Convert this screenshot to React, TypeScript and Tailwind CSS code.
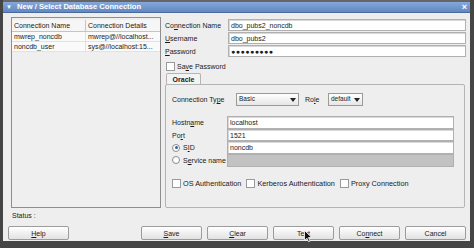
import React from 'react'

const U = ({ children }: { children: React.ReactNode }) => <span className="underline underline-offset-[1px]">{children}</span>

const Field = ({ label, value, password = false }: { label: React.ReactNode; value: string; password?: boolean }) => (
  <div className="flex items-center h-[12px]">
    <div className="w-[63px] shrink-0">{label}</div>
    <div className="flex-1 h-[12px] bg-white border border-[#b0b0b0] shadow-[inset_1px_1px_0_#d8d8d8] flex items-center px-[2px]">
      {password ? <span className="tracking-[0.5px] text-[7px]">●●●●●●●●●</span> : value}
    </div>
  </div>
)

const InnerField = ({ label, value, disabled = false }: { label: React.ReactNode; value?: string; disabled?: boolean }) => (
  <div className="flex items-center h-[12.7px]">
    <div className="w-[55px] shrink-0 flex items-center">{label}</div>
    <div
      className={
        'flex-1 h-[12.5px] border border-[#b0b0b0] flex items-center px-[2px] ' +
        (disabled ? 'bg-[#c2c2c2]' : 'bg-white shadow-[inset_1px_1px_0_#d8d8d8]')
      }
    >
      {value}
    </div>
  </div>
)

const Check = ({ label }: { label: React.ReactNode }) => (
  <div className="flex items-center gap-[2px]">
    <div className="w-[9px] h-[9px] bg-white border border-[#9a9a9a]" />
    <span>{label}</span>
  </div>
)

const Radio = ({ on }: { on?: boolean }) => (
  <div className="w-[8px] h-[8px] rounded-full bg-white border border-[#8a8a8a] flex items-center justify-center mr-[3px]">
    {on && <div className="w-[3px] h-[3px] rounded-full bg-[#3a5f9a]" />}
  </div>
)

const Select = ({ value, w }: { value: string; w: string }) => (
  <div className={w + ' h-[13px] bg-gradient-to-b from-white to-[#e6e6e6] border border-[#9a9a9a] flex items-center justify-between px-[2px]'}>
    <span className="text-[6.5px]">{value}</span>
    <svg width="6" height="4" viewBox="0 0 6 4"><path d="M0 0h6L3 4z" fill="#222" /></svg>
  </div>
)

const Btn = ({ children }: { children: React.ReactNode }) => (
  <div className="w-[61px] h-[14px] rounded-[2px] border border-[#9c9c9c] bg-gradient-to-b from-white to-[#e2e2e2] flex items-center justify-center">
    {children}
  </div>
)

export default function App() {
  return (
    <div className="w-[474px] h-[248px] bg-[#454545] overflow-hidden text-[7px] leading-none text-[#1a1a1a] font-['Liberation_Sans',sans-serif] relative">
      <div className="ml-[3px] mr-[4px] h-[241px] bg-[#eeeeee] flex flex-col">
        <div className="h-[13px] border-t-[2px] border-[#666] border-b border-b-[#4a6a9a] bg-gradient-to-b from-[#86a8d9] to-[#6088c4] flex items-center px-[2px] text-white font-bold">
          <span className="text-[6px] mr-[5px] ml-[1px]">▼</span>
          <span className="text-[7.6px]">New / Select Database Connection</span>
          <span className="ml-auto text-[9px] mr-[1px]">×</span>
        </div>

        <div className="flex pt-[4px] pl-[8px]">
          <div className="w-[150px] h-[191px] border border-[#8e8e8e] bg-[#efefef] flex flex-col">
            <div className="flex h-[12px] bg-[#f6f6f6] border-b border-[#c4c4c4] mt-[2px]">
              <div className="w-[74px] border-r border-[#c4c4c4] flex items-center pl-[2px]">Connection Name</div>
              <div className="flex-1 flex items-center pl-[2px]">Connection Details</div>
            </div>
            {[
              ['mwrep_noncdb', 'mwrep@//localhost...'],
              ['noncdb_user', 'sys@//localhost:15...'],
            ].map(([a, b]) => (
              <div key={a} className="flex h-[10px] bg-[#fafafa] border-b border-[#e2e2e2]">
                <div className="w-[74px] border-r border-[#e0e0e0] flex items-center pl-[2px]">{a}</div>
                <div className="flex-1 flex items-center pl-[2px] whitespace-nowrap overflow-hidden">{b}</div>
              </div>
            ))}
          </div>

          <div className="w-[301px] ml-[4px] pt-[2px] flex flex-col">
            <div className="flex flex-col gap-[1px]">
              <Field label={<>Co<U>n</U>nection Name</>} value="dbo_pubs2_noncdb" />
              <Field label={<><U>U</U>sername</>} value="dbo_pubs2" />
              <Field label={<><U>P</U>assword</>} value="" password />
            </div>
            <div className="mt-[4px] ml-[1px] h-[10px] flex items-center">
              <Check label={<>Sa<U>v</U>e Password</>} />
            </div>
            <div className="mt-[2px] ml-[1px] w-[35px] h-[11px] border border-b-0 border-[#b4b4b4] rounded-t-[2px] bg-[#f3f3f3] flex items-center justify-center font-bold">
              Oracle
            </div>
            <div className="w-[300px] h-[124px] border border-[#b4b4b4] rounded-[2px] pl-[6px] pr-[10px] pt-[8px] flex flex-col">
              <div className="flex items-center h-[13px]">
                <div className="w-[64px]">Connection Ty<U>p</U>e</div>
                <Select value="Basic" w="w-[63px]" />
                <div className="ml-[6px] w-[23px]">Ro<U>l</U>e</div>
                <Select value="default" w="w-[35px]" />
              </div>
              <div className="mt-[10px] flex flex-col">
                <InnerField label={<>Hostn<U>a</U>me</>} value="localhost" />
                <InnerField label={<>Po<U>r</U>t</>} value="1521" />
                <InnerField label={<><Radio on />S<U>I</U>D</>} value="noncdb" />
                <InnerField label={<><Radio /><span>S<U>e</U>rvice name</span></>} disabled />
              </div>
              <div className="mt-[12px] flex items-center gap-[5px] text-[7.3px]">
                <Check label="OS Authentication" />
                <Check label="Kerberos Authentication" />
                <Check label="Proxy Connection" />
              </div>
            </div>
          </div>
        </div>

        <div className="pl-[9px] mt-[2px] h-[10px] flex items-center">Status :</div>

        <div className="mt-[6px] pl-[5px] flex">
          <Btn><U>H</U>elp</Btn>
          <div className="ml-[72px] flex gap-[5px]">
            <Btn><U>S</U>ave</Btn>
            <Btn><U>C</U>lear</Btn>
            <Btn>Te<U>s</U>t</Btn>
            <Btn>Co<U>n</U>nect</Btn>
            <Btn>Cancel</Btn>
          </div>
        </div>
      </div>

      <svg className="absolute left-[304px] top-[230px]" width="8" height="12" viewBox="0 0 8 12">
        <path d="M0.5 0.5v10l2.4-2.3 1.7 3.6 1.5-.7-1.7-3.5h3.3z" fill="#111" stroke="#fff" strokeWidth="0.8" />
      </svg>
    </div>
  )
}
